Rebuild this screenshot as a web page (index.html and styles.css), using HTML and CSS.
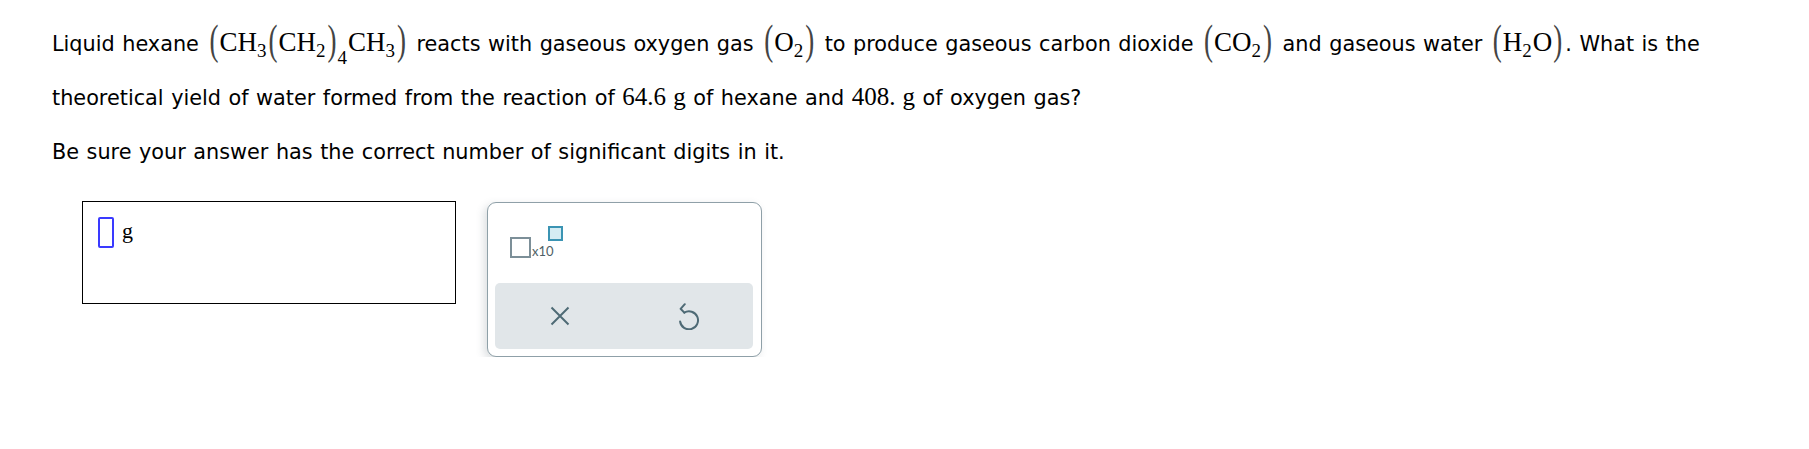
FILE: index.html
```html
<!DOCTYPE html>
<html>
<head>
<meta charset="utf-8">
<link rel="stylesheet" href="styles.css">
</head>
<body>
<div class="page">
  <p class="q">Liquid hexane <span class="m"><span class="bp">(</span>CH<span class="sb">3</span><span class="bp">(</span>CH<span class="sb">2</span><span class="bp">)</span><span class="sb lo">4</span>CH<span class="sb">3</span><span class="bp">)</span></span> reacts with gaseous oxygen gas <span class="m"><span class="bp">(</span>O<span class="sb">2</span><span class="bp">)</span></span> to produce gaseous carbon dioxide <span class="m"><span class="bp">(</span>CO<span class="sb">2</span><span class="bp">)</span></span> and gaseous water <span class="m"><span class="bp">(</span>H<span class="sb">2</span>O<span class="bp">)</span></span>. What is the theoretical yield of water formed from the reaction of <span class="mn">64.6 g</span> of hexane and <span class="mn">408. g</span> of oxygen gas?</p>
  <p class="q">Be sure your answer has the correct number of significant digits in it.</p>
  <div class="answer">
    <div class="input"><span class="cursor"></span><span class="unit">g</span></div>
    <div class="panel">
      <div class="tools">
        <span class="x10"><span class="base"></span><span class="lbl">x10</span><span class="exp"></span></span>
      </div>
      <div class="actions">
        <span class="btn"><svg width="20" height="20" viewBox="0 0 20 20"><path d="M1.5 1.5 L18.5 18.5 M18.5 1.5 L1.5 18.5" stroke="#4e6a75" stroke-width="2" fill="none"/></svg></span>
        <span class="btn"><svg width="22" height="27" viewBox="0 0 22 27"><path d="M6.3 9.6 A9 9 0 1 1 2.1 18.5" stroke="#4e6a75" stroke-width="2" fill="none" stroke-linecap="round"/><path d="M6.8 1.2 L2.6 5.8 L6.3 9.6" stroke="#4e6a75" stroke-width="2" fill="none" stroke-linecap="round" stroke-linejoin="round"/></svg></span>
      </div>
    </div>
  </div>
</div>
</body>
</html>
```
FILE: styles.css
```css
html, body { margin: 0; padding: 0; background: #fff; }
.page {
  padding: 17px 52px 0 52px;
  font-family: "DejaVu Sans", Verdana, sans-serif;
  font-size: 20.8px;
  word-spacing: 0.9px;
  color: #000;
}
.q {
  margin: 0;
  line-height: 54px;
  max-width: 1690px;
}
.m {
  font-family: "Liberation Serif", "Times New Roman", serif;
  font-size: 27px;
  line-height: 1;
  white-space: nowrap;
  word-spacing: 0;
  margin: 0 2px;
}
.mn {
  font-family: "Liberation Serif", "Times New Roman", serif;
  font-size: 25px;
  line-height: 1;
}
.bp {
  display: inline-block;
  font-size: 27px;
  color: #444;
  transform: scale(1, 1.6);
  transform-origin: 50% 60%;
  margin: 0 1px;
}
.sb {
  font-size: 19px;
  position: relative;
  top: 6px;
  margin-right: 1px;
}
.sb.lo { top: 13px; }
.answer {
  display: flex;
  gap: 31px;
  margin: 22px 0 0 30px;
  align-items: flex-start;
}
.input {
  box-sizing: border-box;
  width: 374px;
  height: 103px;
  border: 1px solid #000;
  padding: 15px 0 0 15px;
  display: flex;
  align-items: flex-start;
}
.cursor {
  box-sizing: border-box;
  width: 16px;
  height: 31px;
  border: 2px solid #3a3aff;
  border-radius: 2px;
}
.unit {
  font-family: "Liberation Serif", "Times New Roman", serif;
  font-size: 22px;
  margin-left: 8px;
  margin-top: 1px;
}
.panel {
  box-sizing: border-box;
  width: 275px;
  height: 155px;
  margin-top: 1px;
  border: 1px solid #8fa0a8;
  border-radius: 9px;
  box-shadow: -3px 3px 9px rgba(60, 80, 90, 0.18);
  padding: 0 8px 7px 7px;
  display: flex;
  flex-direction: column;
  background: #fff;
}
.tools {
  height: 80px;
  padding: 23px 0 0 15px;
  box-sizing: border-box;
}
.x10 {
  display: inline-flex;
  align-items: flex-end;
  position: relative;
  height: 32px;
}
.base {
  box-sizing: border-box;
  width: 21px;
  height: 21px;
  border: 2px solid #7c8f98;
  background: #fff;
}
.lbl {
  font-family: "Lato", "DejaVu Sans", sans-serif;
  font-size: 13px;
  color: #4e5f66;
  margin-left: 1px;
  line-height: 13px;
}
.exp {
  box-sizing: border-box;
  width: 15px;
  height: 15px;
  border: 2px solid #3b94b3;
  background: #d4ecf3;
  align-self: flex-start;
  margin-left: -6px;
}
.actions {
  flex: 1;
  background: #e1e6e9;
  border-radius: 5px;
  display: flex;
}
.btn {
  flex: 1;
  display: flex;
  align-items: center;
  justify-content: center;
}
```
